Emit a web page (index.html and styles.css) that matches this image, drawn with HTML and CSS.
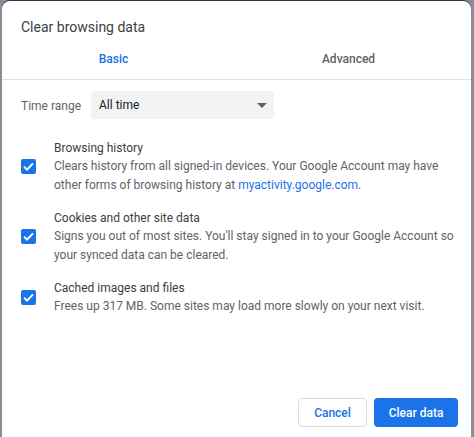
FILE: index.html
```html
<!DOCTYPE html>
<html>
<head>
<meta charset="utf-8">
<link rel="stylesheet" href="styles.css">
</head>
<body>
<div class="dialog">
  <div class="title">Clear browsing data</div>
  <div class="tabs">
    <div class="tab active">Basic</div>
    <div class="tab">Advanced</div>
  </div>
  <div class="range">
    <span class="range-label">Time range</span>
    <div class="select">
      <span>All time</span>
      <svg class="arrow" width="10" height="5" viewBox="0 0 10 5"><path d="M0 0h10L5 5z" fill="#5f6368"/></svg>
    </div>
  </div>
  <div class="items">
    <div class="item">
      <div class="check"><svg width="11" height="9" viewBox="0 0 11 9"><path d="M1 4.6l3 3L10 1.4" fill="none" stroke="#fff" stroke-width="2"/></svg></div>
      <div class="text">
        <div class="label">Browsing history</div>
        <div class="desc">Clears history from all signed-in devices. Your Google Account may have other forms of browsing history at <span class="link">myactivity.google.com</span>.</div>
      </div>
    </div>
    <div class="item">
      <div class="check"><svg width="11" height="9" viewBox="0 0 11 9"><path d="M1 4.6l3 3L10 1.4" fill="none" stroke="#fff" stroke-width="2"/></svg></div>
      <div class="text">
        <div class="label">Cookies and other site data</div>
        <div class="desc">Signs you out of most sites. You'll stay signed in to your Google Account so your synced data can be cleared.</div>
      </div>
    </div>
    <div class="item">
      <div class="check"><svg width="11" height="9" viewBox="0 0 11 9"><path d="M1 4.6l3 3L10 1.4" fill="none" stroke="#fff" stroke-width="2"/></svg></div>
      <div class="text">
        <div class="label">Cached images and files</div>
        <div class="desc">Frees up 317 MB. Some sites may load more slowly on your next visit.</div>
      </div>
    </div>
  </div>
  <div class="footer">
    <button class="btn cancel">Cancel</button>
    <button class="btn primary">Clear data</button>
  </div>
</div>
</body>
</html>
```
FILE: styles.css
```css
html, body {
  margin: 0;
  height: 100%;
}
body {
  background: #8a8e94;
  font-family: Roboto, "Liberation Sans", Arial, sans-serif;
  overflow: hidden;
}
.dialog {
  box-sizing: border-box;
  margin: 1px 3px 0 2px;
  height: 436px;
  background: #fff;
  border-radius: 8px 8px 0 0;
  display: flex;
  flex-direction: column;
  overflow: hidden;
  box-shadow: 0 -1px 0 #2c3648;
}
.title {
  padding: 17px 0 0 19px;
  height: 18px;
  line-height: 18px;
  font-size: 14px;
  color: #3c4043;
}
.tabs {
  display: grid;
  grid-template-columns: 235px 235px;
  margin: 15px 0 0 -6px;
  height: 28px;
  border-bottom: 1px solid #e3e3e5;
  width: 477px;
}
.tab {
  text-align: center;
  font-size: 12px;
  font-weight: 500;
  line-height: 16px;
  color: #5f6368;
}
.tab.active {
  color: #1a73e8;
}
.range {
  display: flex;
  align-items: center;
  margin: 11px 0 0 19px;
}
.range-label {
  width: 70px;
  font-size: 12px;
  color: #5f6368;
  padding-top: 2px;
}
.select {
  box-sizing: border-box;
  width: 183px;
  height: 28px;
  background: #f1f3f4;
  border-radius: 4px;
  display: flex;
  align-items: center;
  justify-content: space-between;
  padding: 0 7px 0 8px;
  font-size: 12px;
  color: #202124;
}
.arrow {
  display: block;
  margin-top: 1px;
}
.items {
  margin: 20px 0 0 19px;
  display: flex;
  flex-direction: column;
  gap: 15px;
}
.item {
  display: flex;
  align-items: center;
}
.check {
  width: 15px;
  height: 15px;
  border-radius: 2px;
  background: #1a73e8;
  display: flex;
  align-items: center;
  justify-content: center;
  margin-right: 18px;
  flex: none;
}
.text {
  width: 410px;
}
.label {
  font-size: 12px;
  line-height: 18px;
  color: #3c4043;
}
.desc {
  font-size: 12px;
  line-height: 18.5px;
  color: #5f6368;
}
.link {
  color: #1a73e8;
}
.footer {
  margin-top: auto;
  display: flex;
  justify-content: flex-end;
  gap: 7px;
  padding: 0 13px 10px 0;
}
.btn {
  font-family: inherit;
  font-size: 12px;
  font-weight: 500;
  height: 29px;
  border-radius: 4px;
  padding: 0;
  cursor: pointer;
}
.cancel {
  width: 69px;
  background: #fff;
  color: #1a73e8;
  border: 1px solid #dadce0;
}
.primary {
  width: 84px;
  background: #1a73e8;
  color: #fff;
  border: none;
}
```
